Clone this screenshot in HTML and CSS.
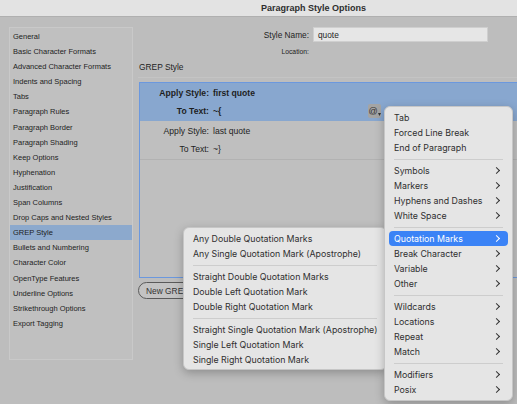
FILE: index.html
```html
<!DOCTYPE html>
<html lang="en">
<head>
    <meta charset="UTF-8">
    <meta name="viewport" content="width=device-width, initial-scale=1.0">
    <title>Paragraph Style Options</title>
    <link rel="stylesheet" href="styles.css">
</head>
<body>
    <div class="window">
        <div class="titlebar">Paragraph Style Options</div>

        <div class="dialog">
            <!-- left list of option pages -->
            <ul class="sections">
                <li>General</li>
                <li>Basic Character Formats</li>
                <li>Advanced Character Formats</li>
                <li>Indents and Spacing</li>
                <li>Tabs</li>
                <li>Paragraph Rules</li>
                <li>Paragraph Border</li>
                <li>Paragraph Shading</li>
                <li>Keep Options</li>
                <li>Hyphenation</li>
                <li>Justification</li>
                <li>Span Columns</li>
                <li>Drop Caps and Nested Styles</li>
                <li class="active">GREP Style</li>
                <li>Bullets and Numbering</li>
                <li>Character Color</li>
                <li>OpenType Features</li>
                <li>Underline Options</li>
                <li>Strikethrough Options</li>
                <li>Export Tagging</li>
            </ul>

            <div class="panel">
                <div class="name-row">
                    <span class="name-label">Style Name:</span>
                    <div class="field">quote</div>
                </div>
                <div class="location-row">
                    <span class="name-label">Location:</span>
                </div>

                <div class="section-title">GREP Style</div>

                <div class="rules">
                    <div class="rule selected">
                        <div class="rule-line"><span class="key">Apply Style:</span><span>first quote</span></div>
                        <div class="rule-line">
                            <span class="key">To Text:</span><span>~{</span>
                            <span class="special">@<svg width="3" height="3" viewBox="0 0 3 3"><path d="M0 0h3L1.5 3z" fill="#333"/></svg></span>
                        </div>
                    </div>
                    <div class="rule">
                        <div class="rule-line"><span class="key">Apply Style:</span><span>last quote</span></div>
                        <div class="rule-line"><span class="key">To Text:</span><span>~}</span></div>
                    </div>
                </div>

                <button class="new-grep">New GREP Style</button>
            </div>
        </div>

        <!-- special characters popup -->
        <div class="menu main-menu">
            <div class="item">Tab</div>
            <div class="item">Forced Line Break</div>
            <div class="item">End of Paragraph</div>
            <div class="sep"></div>
            <div class="item sub">Symbols</div>
            <div class="item sub">Markers</div>
            <div class="item sub">Hyphens and Dashes</div>
            <div class="item sub">White Space</div>
            <div class="sep"></div>
            <div class="item sub open">Quotation Marks</div>
            <div class="item sub">Break Character</div>
            <div class="item sub">Variable</div>
            <div class="item sub">Other</div>
            <div class="sep"></div>
            <div class="item sub">Wildcards</div>
            <div class="item sub">Locations</div>
            <div class="item sub">Repeat</div>
            <div class="item sub">Match</div>
            <div class="sep"></div>
            <div class="item sub">Modifiers</div>
            <div class="item sub">Posix</div>
        </div>

        <div class="menu sub-menu">
            <div class="item">Any Double Quotation Marks</div>
            <div class="item">Any Single Quotation Mark (Apostrophe)</div>
            <div class="sep"></div>
            <div class="item">Straight Double Quotation Marks</div>
            <div class="item">Double Left Quotation Mark</div>
            <div class="item">Double Right Quotation Mark</div>
            <div class="sep"></div>
            <div class="item">Straight Single Quotation Mark (Apostrophe)</div>
            <div class="item">Single Left Quotation Mark</div>
            <div class="item">Single Right Quotation Mark</div>
        </div>
    </div>
</body>
</html>
```

FILE: styles.css
```css
body {
    margin: 0;
    padding: 0;
    background-color: #bdbdbd;
    font-family: "Liberation Sans", Arial, sans-serif;
    color: #1e1e1e;
}
.window {
    position: relative;
    width: 517px;
    height: 404px;
    overflow: hidden;
    background-color: #bdbdbd;
}
.titlebar {
    height: 17px;
    line-height: 17px;
    background-color: #e3e3e3;
    border-bottom: 1px solid #b0b0b0;
    box-sizing: border-box;
    text-align: center;
    font-size: 9px;
    font-weight: bold;
    color: #2e2e2e;
    padding-left: 110px;
}

.dialog {
    display: grid;
    grid-template-columns: 124px 1fr;
    column-gap: 5px;
    padding: 10px 0 0 9px;
}

/* option pages */
.sections {
    list-style: none;
    margin: 0;
    padding: 1px 0 0;
    height: 333px;
    box-sizing: border-box;
    border: 1px solid #c9c9c9;
    background-color: #c0c0c0;
}
.sections li {
    height: 15.1px;
    line-height: 15px;
    padding-left: 3px;
    font-size: 7.5px;
    white-space: nowrap;
}
.sections li.active {
    background-color: #8ca9cd;
}

.panel {
    display: flex;
    flex-direction: column;
    align-items: flex-start;
    margin-right: -10px;
}
.name-row, .location-row {
    display: grid;
    grid-template-columns: 171px 175px;
    column-gap: 4px;
    align-items: center;
}
.name-row {
    height: 15px;
}
.name-label {
    text-align: right;
    font-size: 8.3px;
}
.location-row {
    margin-top: 3px;
    height: 12px;
}
.location-row .name-label {
    font-size: 6.8px;
}
.field {
    height: 15px;
    line-height: 15px;
    box-sizing: border-box;
    padding-left: 4px;
    background-color: #e6e6e6;
    border: 1px solid #cfcfcf;
    font-size: 8.3px;
}
.section-title {
    margin-top: 4px;
    padding-left: 1px;
    height: 12px;
    line-height: 12px;
    font-size: 8.4px;
    align-self: stretch;
    border-bottom: 1px solid #c4c4c4;
    padding-bottom: 4px;
}

.rules {
    margin-top: 4px;
    margin-left: 1px;
    align-self: stretch;
    height: 196px;
    box-sizing: border-box;
    border: 1px solid #6b98de;
    background-color: #bfbfbf;
}
.rule {
    height: 37px;
    padding-top: 1px;
    padding-right: 145px;
    border-bottom: 1px solid #b2b2b2;
    font-size: 8.6px;
}
.rule.selected {
    background-color: #88a7cf;
    font-weight: bold;
    border-bottom: none;
}
.rule-line {
    display: flex;
    align-items: center;
    height: 18px;
}
.rule-line .key {
    width: 69px;
    text-align: right;
    margin-right: 4px;
}
.special {
    margin-left: auto;
    width: 13px;
    height: 14px;
    display: flex;
    align-items: center;
    justify-content: center;
    background-color: #a4a4a4;
    border-radius: 2px;
    font-weight: normal;
    font-size: 9px;
    color: #333;
}
.special svg {
    margin-top: 6px;
}

.new-grep {
    margin-top: 4px;
    height: 17px;
    padding: 0 7px;
    border: 1px solid #5a5a5a;
    border-radius: 9px;
    background-color: #c3c3c3;
    font-family: inherit;
    font-size: 8.4px;
    color: #333;
}

/* popup menus */
.menu {
    position: absolute;
    box-sizing: border-box;
    padding: 3px 4px;
    background-color: #e5e5e5;
    border: 0.5px solid #c6c6c6;
    border-radius: 6px;
    box-shadow: 0 3px 10px rgba(0, 0, 0, 0.25);
    font-family: Inter, "Noto Sans", sans-serif;
    font-size: 8.8px;
    color: #2f2f2f;
}
.main-menu {
    left: 384px;
    top: 106px;
    width: 129px;
    height: 295px;
    z-index: 2;
}
.sub-menu {
    left: 183px;
    top: 227px;
    width: 204px;
    height: 143px;
    z-index: 1;
}
.menu .item {
    height: 15px;
    line-height: 15px;
    padding: 0 6px 0 5px;
    border-radius: 4px;
    display: flex;
    justify-content: space-between;
    align-items: center;
    white-space: nowrap;
}
.menu .sub::after {
    content: "";
    width: 4px;
    height: 4px;
    border-right: 1.4px solid #333;
    border-top: 1.4px solid #333;
    transform: rotate(45deg);
    margin-right: 3px;
}
.menu .open {
    background-color: #3b83f6;
    color: #fff;
}
.menu .open::after {
    border-color: #fff;
}
.menu .sep {
    height: 1px;
    margin: 3.5px 5px;
    background-color: #cdcdcd;
}
```
